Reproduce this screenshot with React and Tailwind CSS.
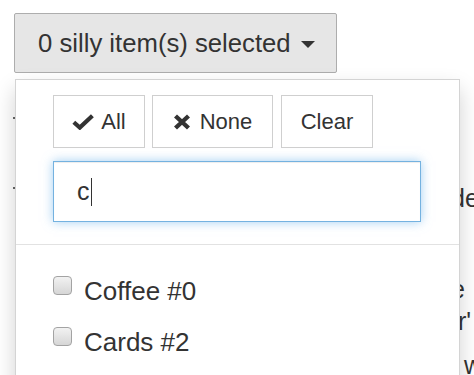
import React from "react";

function Check() {
  return (
    <svg width="22" height="16" viewBox="0 0 22 16" className="block">
      <path d="M1.8 8.3 L7.8 13.6 L20.4 1.8" fill="none" stroke="#333" strokeWidth="4.2" strokeLinejoin="miter" />
    </svg>
  );
}

function XIcon() {
  return (
    <svg width="18" height="16" viewBox="0 0 18 16" className="block">
      <path d="M2.5 2 L15.5 14 M15.5 2 L2.5 14" fill="none" stroke="#333" strokeWidth="4.4" />
    </svg>
  );
}

function Box() {
  return (
    <div className="w-[19px] h-[19px] shrink-0 rounded-[4px] border border-[#a3a3a3] bg-gradient-to-b from-[#f2f2f2] to-[#d6d6d6]" />
  );
}

export default function App() {
  return (
    <div
      className="relative w-[474px] h-[375px] overflow-hidden bg-white text-[#333]"
      style={{ fontFamily: '"Liberation Sans", Arial, sans-serif' }}
    >
      {/* background page text fragments */}
      <div className="absolute left-[451px] top-[186px] text-[25px] leading-none">de</div>
      <div className="absolute left-[451px] top-[277px] text-[25px] leading-none">e</div>
      <div className="absolute left-[458px] top-[309px] text-[25px] leading-none">r'</div>
      <div className="absolute left-[464px] top-[353px] text-[25px] leading-none">w</div>
      <div className="absolute left-[13px] top-[117px] w-[3px] h-[2px] bg-[#666]" />
      <div className="absolute left-[13px] top-[187px] w-[3px] h-[2px] bg-[#666]" />

      <div className="pt-[13px] pl-[14px]">
        <button className="flex items-center h-[60px] w-[323px] pl-[23px] border border-[#adadad] bg-[#e6e6e6] rounded-[2px] text-[25.7px] text-[#333]">
          <span>0 silly item(s) selected</span>
          <span className="ml-[10px] mt-[2px] w-0 h-0 border-l-[7px] border-r-[7px] border-t-[7px] border-l-transparent border-r-transparent border-t-[#333]" />
        </button>
      </div>

      <div className="absolute left-[15px] top-[79px] w-[445px] h-[320px] bg-white border border-[#d4d4d4] shadow-[0_10px_20px_rgba(0,0,0,0.18)]">
        <div className="pt-[15px] pl-[37px]">
          <div className="flex gap-[7px]">
            <div className="flex items-center justify-center gap-[7px] w-[92px] h-[53px] border border-[#cfcfcf] bg-white text-[22px]">
              <Check />
              <span>All</span>
            </div>
            <div className="flex items-center justify-center gap-[9px] w-[121px] h-[53px] border border-[#cfcfcf] bg-white text-[22px]">
              <XIcon />
              <span>None</span>
            </div>
            <div className="flex items-center justify-center w-[92px] h-[53px] border border-[#cfcfcf] bg-white text-[22px] ml-[1px]">
              Clear
            </div>
          </div>
          <div className="mt-[13px] w-[368px] h-[61px] border border-[#74b2e0] bg-white shadow-[inset_0_1px_1px_rgba(0,0,0,0.075),0_0_10px_rgba(102,175,233,0.6)] flex items-center pl-[23px] text-[25px]">
            <span>c</span>
            <span className="w-px h-[28px] bg-[#333] ml-[1px]" />
          </div>
        </div>
        <div className="mt-[22px] h-px bg-[#e2e2e2]" />
        <div className="pl-[37px] pt-[31px] flex flex-col gap-[32px]">
          <div className="flex items-start gap-[12px] h-[19px]">
            <Box />
            <span className="text-[26px] leading-none mt-[2px] whitespace-nowrap">Coffee #0</span>
          </div>
          <div className="flex items-start gap-[12px] h-[19px]">
            <Box />
            <span className="text-[26px] leading-none mt-[2px] whitespace-nowrap">Cards #2</span>
          </div>
        </div>
      </div>
    </div>
  );
}
